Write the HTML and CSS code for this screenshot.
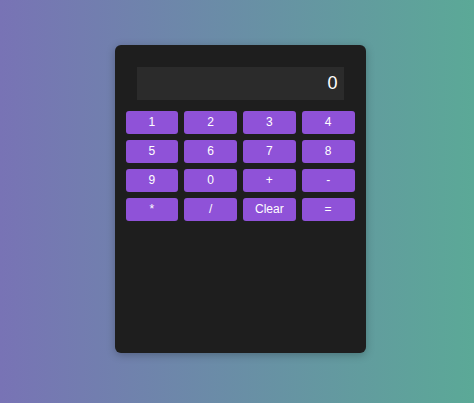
FILE: index.html
```html
<!DOCTYPE html>
<html lang="en">
<head>
    <meta charset="UTF-8">
    <meta name="viewport" content="width=device-width, initial-scale=1.0">
    <title>Calculator</title>
    <link rel="stylesheet" href="styles.css">
</head>
<body>
    <div class="calculator">
        <div class="display">0</div>
        <div class="keys">
            <button class="key">1</button>
            <button class="key">2</button>
            <button class="key">3</button>
            <button class="key">4</button>
            <button class="key">5</button>
            <button class="key">6</button>
            <button class="key">7</button>
            <button class="key">8</button>
            <button class="key">9</button>
            <button class="key">0</button>
            <button class="key">+</button>
            <button class="key">-</button>
            <button class="key">*</button>
            <button class="key">/</button>
            <button class="key">Clear</button>
            <button class="key">=</button>
        </div>
    </div>
</body>
</html>
```

FILE: styles.css
```css
body {
    margin: 0;
    height: 403px;
    font-family: "Liberation Sans", Arial, sans-serif;
    background: linear-gradient(to right, #7873b5, #5ba997);
    display: flex;
    align-items: center;
    justify-content: center;
}
.calculator {
    width: 229px;
    height: 286px;
    padding: 11px;
    background-color: #1e1e1e;
    border-radius: 6px;
    box-shadow: 0 2px 8px rgba(0, 0, 0, 0.25);
    margin: -6px 0 0 6px;
}
.display {
    margin: 11px;
    height: 33px;
    background-color: #2b2b2b;
    color: white;
    font-size: 18px;
    display: flex;
    align-items: center;
    justify-content: flex-end;
    padding: 0 6px 0 8px;
}
.keys {
    display: grid;
    grid-template-columns: repeat(4, 1fr);
    gap: 6px;
}
.key {
    height: 23px;
    border: none;
    border-radius: 3px;
    background-color: #8f52d8;
    color: white;
    font-family: "Liberation Sans", Arial, sans-serif;
    font-size: 12px;
    padding: 0;
    cursor: pointer;
}
.key:hover {
    background-color: #7d43c4;
}
```
